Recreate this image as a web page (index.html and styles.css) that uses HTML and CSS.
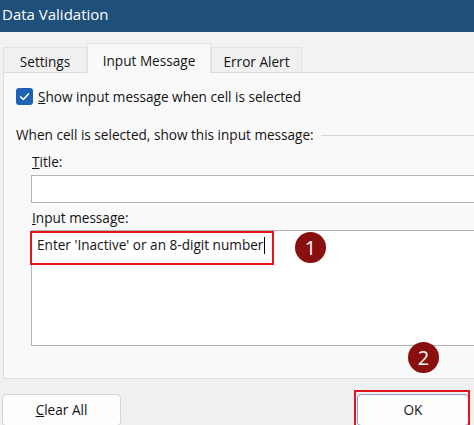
FILE: index.html
```html
<!DOCTYPE html>
<html>
<head>
<meta charset="utf-8">
<link rel="stylesheet" href="styles.css">
</head>
<body>
<div class="dialog">
  <div class="titlebar">Data Validation</div>
  <div class="tabs">
    <div class="tab tab-settings">Settings</div>
    <div class="tab tab-input active">Input Message</div>
    <div class="tab tab-error">Error Alert</div>
  </div>
  <div class="panel">
    <div class="check-row">
      <span class="checkbox"><svg width="17" height="17" viewBox="0 0 17 17"><path d="M4.6 8.9 L7.3 11.4 L12.4 5.9" fill="none" stroke="#fff" stroke-width="1.5" stroke-linecap="round" stroke-linejoin="round"/></svg></span>
      <span><u>S</u>how input message when cell is selected</span>
    </div>
    <div class="group-head">
      <span>When cell is selected, show this input message:</span>
      <span class="rule"></span>
    </div>
    <div class="fields">
      <div class="label label-title"><u>T</u>itle:</div>
      <div class="input"></div>
      <div class="label label-msg"><u>I</u>nput message:</div>
      <div class="textarea"><span class="msg">Enter 'Inactive' or an 8-digit number</span><span class="caret"></span></div>
    </div>
  </div>
  <div class="footer">
    <div class="btn btn-clear"><u>C</u>lear All</div>
    <div class="btn btn-ok">OK</div>
  </div>
  <div class="highlight highlight-msg"></div>
  <div class="highlight highlight-ok"></div>
  <div class="badge badge-1">1</div>
  <div class="badge badge-2">2</div>
</div>
</body>
</html>
```
FILE: styles.css
```css
html, body {
  margin: 0;
  padding: 0;
  background: #f0f0f0;
}

body {
  font-family: "Open Sans", "Noto Sans", sans-serif;
  font-size: 13.6px;
  color: #141414;
}

.dialog {
  position: relative;
  width: 474px;
  height: 425px;
  overflow: hidden;
  background: #f0f0f0;
}

.titlebar {
  height: 32px;
  background: #1f4f7b;
  color: #ffffff;
  font-size: 15px;
  line-height: 29px;
  padding-left: 2px;
  box-sizing: border-box;
}

.tabs {
  display: flex;
  align-items: flex-end;
  height: 40px;
  padding-left: 3px;
  box-sizing: border-box;
  background: #f2f2f3;
}

.tab {
  height: 25px;
  padding-top: 3px;
  line-height: 22px;
  box-sizing: border-box;
  text-align: center;
  background: #f0f0f0;
  border: 1px solid #e2e2e2;
  border-bottom: none;
  white-space: nowrap;
}

.tab-settings { width: 84px; }
.tab-input { width: 124px; }
.tab-error { width: 91px; }

.tab.active {
  height: 30px;
  padding-top: 6px;
  line-height: 21px;
  margin-bottom: -1px;
  background: #f9f9f9;
  border-color: #e4e4e4;
  position: relative;
  z-index: 1;
}

.panel {
  margin-left: 3px;
  width: 560px;
  height: 307px;
  box-sizing: border-box;
  border: 1px solid #dcdcdc;
  background: #f9f9f9;
  padding: 15px 0 0 12px;
}

.check-row {
  display: flex;
  align-items: center;
  gap: 5px;
  height: 17px;
}

.checkbox {
  display: block;
  width: 17px;
  height: 17px;
  border-radius: 3px;
  background: #1f62b3;
}

.checkbox svg {
  display: block;
}

.group-head {
  display: flex;
  align-items: center;
  margin-top: 20px;
  line-height: 20px;
  white-space: nowrap;
}

.group-head .rule {
  flex: 1;
  height: 1px;
  margin-left: 7px;
  background: #d6d6d6;
}

.fields {
  padding-left: 15px;
}

.label {
  line-height: 20px;
  padding-left: 1px;
}

.label-title { margin-top: 7px; }
.label-msg { margin-top: 5px; }

.input {
  margin-top: 3px;
  height: 28px;
  box-sizing: border-box;
  border: 1px solid #b4b4b4;
  background: #ffffff;
}

.textarea {
  margin-top: 2px;
  height: 116px;
  box-sizing: border-box;
  border: 1px solid #b4b4b4;
  background: #ffffff;
  padding: 4px 0 0 5px;
  line-height: 20px;
  white-space: nowrap;
}

.caret {
  display: inline-block;
  width: 1px;
  height: 17px;
  margin-left: 1px;
  background: #000;
  vertical-align: -4px;
}

.footer {
  display: flex;
  justify-content: space-between;
  padding: 15px 5px 0 2px;
}

.btn {
  height: 32px;
  box-sizing: border-box;
  border: 1px solid #d4d4d4;
  border-radius: 4px;
  background: #fdfdfd;
  line-height: 30px;
  text-align: center;
}

.btn-clear { width: 119px; }

.btn-ok {
  width: 112px;
  border-color: #8d9bd0;
}

.highlight {
  position: absolute;
  box-sizing: border-box;
  border: 2px solid #e3141c;
}

.highlight-msg {
  left: 30px;
  top: 231px;
  width: 244px;
  height: 34px;
}

.highlight-ok {
  left: 354px;
  top: 390px;
  width: 116px;
  height: 44px;
}

.badge {
  position: absolute;
  width: 31px;
  height: 31px;
  border-radius: 50%;
  background: #8a1010;
  color: #ffffff;
  font-size: 20px;
  line-height: 31px;
  text-align: center;
}

.badge-1 { left: 295px; top: 232px; }
.badge-2 { left: 408px; top: 342px; }
```
